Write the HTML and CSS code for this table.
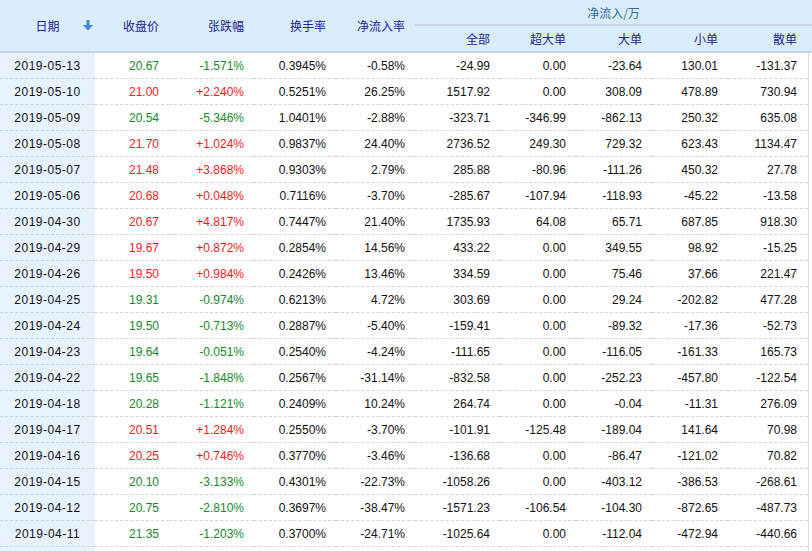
FILE: index.html
```html
<!DOCTYPE html>
<html lang="zh">
<head>
<meta charset="utf-8">
<title>资金流向</title>
<link rel="stylesheet" href="styles.css">
</head>
<body>
<table class="flow">
  <colgroup>
    <col class="c-date"><col class="c-close"><col class="c-chg"><col class="c-turn"><col class="c-rate">
    <col class="c-all"><col class="c-xl"><col class="c-l"><col class="c-s"><col class="c-sa"><col class="c-gut">
  </colgroup>
  <thead>
    <tr class="h1">
      <th rowspan="2" class="date-h">日期<svg class="sort" width="10" height="11" viewBox="0 0 10 11"><rect x="3.5" y="0" width="3" height="5.5" fill="#3f86dc"/><polygon points="0,5 10,5 5,10.5" fill="#3f86dc"/></svg></th>
      <th rowspan="2">收盘价</th>
      <th rowspan="2">张跌幅</th>
      <th rowspan="2">换手率</th>
      <th rowspan="2">净流入率</th>
      <th colspan="6" class="group">净流入/万</th>
    </tr>
    <tr class="h2">
      <th>全部</th><th>超大单</th><th>大单</th><th>小单</th><th class="last">散单</th><th class="gut"></th>
    </tr>
  </thead>
  <tbody>
    <tr><td>2019-05-13</td><td class="dn">20.67</td><td class="dn">-1.571%</td><td>0.3945%</td><td>-0.58%</td><td>-24.99</td><td>0.00</td><td>-23.64</td><td>130.01</td><td class="last">-131.37</td><td class="gut"></td></tr>
    <tr><td>2019-05-10</td><td class="up">21.00</td><td class="up">+2.240%</td><td>0.5251%</td><td>26.25%</td><td>1517.92</td><td>0.00</td><td>308.09</td><td>478.89</td><td class="last">730.94</td><td class="gut"></td></tr>
    <tr><td>2019-05-09</td><td class="dn">20.54</td><td class="dn">-5.346%</td><td>1.0401%</td><td>-2.88%</td><td>-323.71</td><td>-346.99</td><td>-862.13</td><td>250.32</td><td class="last">635.08</td><td class="gut"></td></tr>
    <tr><td>2019-05-08</td><td class="up">21.70</td><td class="up">+1.024%</td><td>0.9837%</td><td>24.40%</td><td>2736.52</td><td>249.30</td><td>729.32</td><td>623.43</td><td class="last">1134.47</td><td class="gut"></td></tr>
    <tr><td>2019-05-07</td><td class="up">21.48</td><td class="up">+3.868%</td><td>0.9303%</td><td>2.79%</td><td>285.88</td><td>-80.96</td><td>-111.26</td><td>450.32</td><td class="last">27.78</td><td class="gut"></td></tr>
    <tr><td>2019-05-06</td><td class="up">20.68</td><td class="up">+0.048%</td><td>0.7116%</td><td>-3.70%</td><td>-285.67</td><td>-107.94</td><td>-118.93</td><td>-45.22</td><td class="last">-13.58</td><td class="gut"></td></tr>
    <tr><td>2019-04-30</td><td class="up">20.67</td><td class="up">+4.817%</td><td>0.7447%</td><td>21.40%</td><td>1735.93</td><td>64.08</td><td>65.71</td><td>687.85</td><td class="last">918.30</td><td class="gut"></td></tr>
    <tr><td>2019-04-29</td><td class="up">19.67</td><td class="up">+0.872%</td><td>0.2854%</td><td>14.56%</td><td>433.22</td><td>0.00</td><td>349.55</td><td>98.92</td><td class="last">-15.25</td><td class="gut"></td></tr>
    <tr><td>2019-04-26</td><td class="up">19.50</td><td class="up">+0.984%</td><td>0.2426%</td><td>13.46%</td><td>334.59</td><td>0.00</td><td>75.46</td><td>37.66</td><td class="last">221.47</td><td class="gut"></td></tr>
    <tr><td>2019-04-25</td><td class="dn">19.31</td><td class="dn">-0.974%</td><td>0.6213%</td><td>4.72%</td><td>303.69</td><td>0.00</td><td>29.24</td><td>-202.82</td><td class="last">477.28</td><td class="gut"></td></tr>
    <tr><td>2019-04-24</td><td class="dn">19.50</td><td class="dn">-0.713%</td><td>0.2887%</td><td>-5.40%</td><td>-159.41</td><td>0.00</td><td>-89.32</td><td>-17.36</td><td class="last">-52.73</td><td class="gut"></td></tr>
    <tr><td>2019-04-23</td><td class="dn">19.64</td><td class="dn">-0.051%</td><td>0.2540%</td><td>-4.24%</td><td>-111.65</td><td>0.00</td><td>-116.05</td><td>-161.33</td><td class="last">165.73</td><td class="gut"></td></tr>
    <tr><td>2019-04-22</td><td class="dn">19.65</td><td class="dn">-1.848%</td><td>0.2567%</td><td>-31.14%</td><td>-832.58</td><td>0.00</td><td>-252.23</td><td>-457.80</td><td class="last">-122.54</td><td class="gut"></td></tr>
    <tr><td>2019-04-18</td><td class="dn">20.28</td><td class="dn">-1.121%</td><td>0.2409%</td><td>10.24%</td><td>264.74</td><td>0.00</td><td>-0.04</td><td>-11.31</td><td class="last">276.09</td><td class="gut"></td></tr>
    <tr><td>2019-04-17</td><td class="up">20.51</td><td class="up">+1.284%</td><td>0.2550%</td><td>-3.70%</td><td>-101.91</td><td>-125.48</td><td>-189.04</td><td>141.64</td><td class="last">70.98</td><td class="gut"></td></tr>
    <tr><td>2019-04-16</td><td class="up">20.25</td><td class="up">+0.746%</td><td>0.3770%</td><td>-3.46%</td><td>-136.68</td><td>0.00</td><td>-86.47</td><td>-121.02</td><td class="last">70.82</td><td class="gut"></td></tr>
    <tr><td>2019-04-15</td><td class="dn">20.10</td><td class="dn">-3.133%</td><td>0.4301%</td><td>-22.73%</td><td>-1058.26</td><td>0.00</td><td>-403.12</td><td>-386.53</td><td class="last">-268.61</td><td class="gut"></td></tr>
    <tr><td>2019-04-12</td><td class="dn">20.75</td><td class="dn">-2.810%</td><td>0.3697%</td><td>-38.47%</td><td>-1571.23</td><td>-106.54</td><td>-104.30</td><td>-872.65</td><td class="last">-487.73</td><td class="gut"></td></tr>
    <tr><td>2019-04-11</td><td class="dn">21.35</td><td class="dn">-1.203%</td><td>0.3700%</td><td>-24.71%</td><td>-1025.64</td><td>0.00</td><td>-112.04</td><td>-472.94</td><td class="last">-440.66</td><td class="gut"></td></tr>
    <tr class="more"><td></td><td></td><td></td><td></td><td></td><td></td><td></td><td></td><td></td><td class="last"></td><td class="gut"></td></tr>
  </tbody>
</table>
</body>
</html>
```

FILE: styles.css
```css
html, body {
  margin: 0;
  padding: 0;
  background: #ffffff;
}
body {
  font-family: "Liberation Sans", "Noto Sans CJK SC", sans-serif;
  font-size: 12px;
  color: #111111;
  overflow: hidden;
}
.flow {
  width: 812px;
  table-layout: fixed;
  border-collapse: separate;
  border-spacing: 0;
}
.c-date { width: 95px; }
.c-close { width: 74px; }
.c-chg { width: 85px; }
.c-turn { width: 82px; }
.c-rate { width: 79px; }
.c-all { width: 85px; }
.c-xl { width: 76px; }
.c-l { width: 76px; }
.c-s { width: 76px; }
.c-sa { width: 80px; }
.c-gut { width: 4px; }

.flow th {
  background: #d8ecfc;
  color: #24239e;
  font-weight: normal;
  font-family: "Noto Sans CJK SC", "Liberation Sans", sans-serif;
  font-size: 12px;
  text-align: right;
  padding: 0 10px 0 0;
  border-bottom: 2px solid #c6d3e6;
  vertical-align: middle;
  white-space: nowrap;
}
.flow tr.h1 { height: 26px; }
.flow tr.h2 { height: 27px; }
.flow th.date-h {
  position: relative;
  text-align: center;
  padding: 0;
}
.sort {
  position: absolute;
  right: 2px;
  top: 20px;
}
.flow th.group {
  text-align: center;
  color: #356a9f;
  padding: 0;
  border-bottom: 2px solid #c9d5e4;
}
.flow th.last, .flow td.last { padding-right: 11px; }
.flow th.gut { padding: 0; }

.flow tbody tr { height: 26px; }
.flow td {
  text-align: right;
  padding: 0 10px 0 0;
  border-bottom: 1px dashed #d4d4d4;
  white-space: nowrap;
  vertical-align: middle;
}
.flow td:first-child {
  background: #e6f2fd;
  text-align: center;
  padding: 0;
  letter-spacing: 0.5px;
}
.flow td.gut {
  padding: 0;
  border-bottom: none;
  border-left: 1px solid #dcdcdc;
}
.flow td.up { color: #ff1a1a; }
.flow td.dn { color: #17882a; }
.flow tr.more td { border-bottom: none; }
```
